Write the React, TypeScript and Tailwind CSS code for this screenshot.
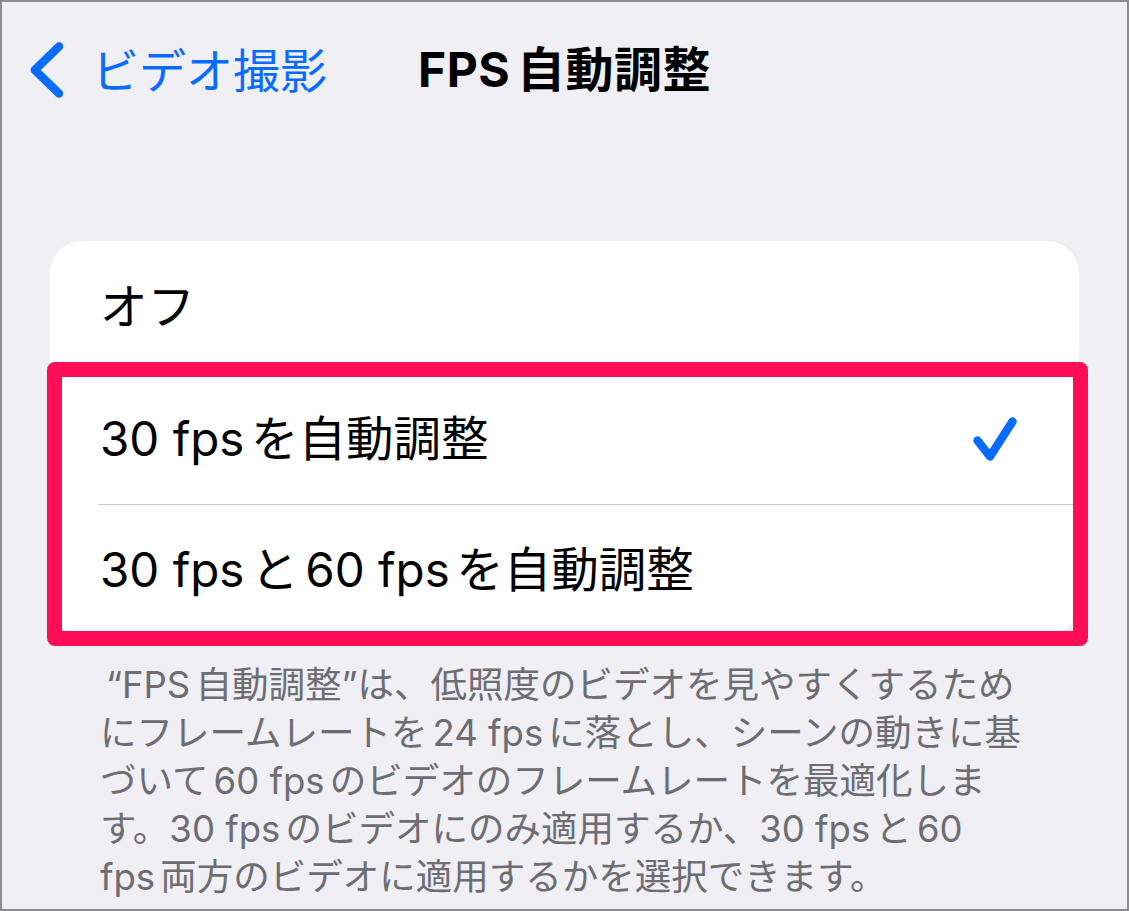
import React from "react";

const CJK = /[\u3040-\u30ff\u3400-\u9fff\uff00-\uffef]/;

function AutoSpace({ text }: { text: string }) {
  const parts = text.split(/([A-Za-z0-9][A-Za-z0-9 ]*[A-Za-z0-9]|[A-Za-z0-9])/);
  return (
    <>
      {parts.map((p, i) => {
        if (i % 2 === 0) return <React.Fragment key={i}>{p}</React.Fragment>;
        const prev = parts[i - 1] || "";
        const next = parts[i + 1] || "";
        const left = prev.length > 0 && CJK.test(prev[prev.length - 1]);
        const right = next.length > 0 && CJK.test(next[0]);
        return (
          <span
            key={i}
            className={
              (left ? "ml-[0.14em] " : "") + (right ? "mr-[0.14em]" : "")
            }
          >
            {p}
          </span>
        );
      })}
    </>
  );
}

function Chevron() {
  return (
    <svg width="34" height="56" viewBox="0 0 34 56" fill="none">
      <path
        d="M29 4.5 L4.8 28 L29 51.5"
        stroke="#0a6cff"
        strokeWidth="8.5"
        strokeLinecap="round"
        strokeLinejoin="round"
      />
    </svg>
  );
}

function Check() {
  return (
    <svg width="44" height="44" viewBox="0 0 44 44" fill="none">
      <path
        d="M4.5 23.5 L17 39.5 L39.5 4.5"
        stroke="#0a6cff"
        strokeWidth="8.5"
        strokeLinecap="round"
        strokeLinejoin="round"
      />
    </svg>
  );
}

export default function App() {
  const footer = [
    "FPS自動調整”は、低照度のビデオを見やすくするため",
    "にフレームレートを24 fpsに落とし、シーンの動きに基",
    "づいて60 fpsのビデオのフレームレートを最適化しま",
    "す。30 fpsのビデオにのみ適用するか、30 fpsと60",
    "fps両方のビデオに適用するかを選択できます。",
  ];
  return (
    <div className="w-[1129px] h-[911px] overflow-hidden border-2 border-[#8c8c8c] bg-[#efeff4] font-['Inter','Noto_Sans_CJK_JP',sans-serif] text-black">
      {/* nav */}
      <div className="h-[136px] grid grid-cols-[1fr_auto_1fr] items-center">
        <div className="flex items-center pl-[28px]">
          <Chevron />
          <span className="ml-[28px] text-[47px] leading-none text-[#0a6cff] whitespace-nowrap">
            ビデオ撮影
          </span>
        </div>
        <div className="text-[48px] leading-none font-bold whitespace-nowrap tracking-[0.5px]">
          <AutoSpace text="FPS自動調整" />
        </div>
        <div />
      </div>

      {/* card */}
      <div className="mt-[103px] mx-[48px] relative rounded-[32px] bg-white">
        <div className="h-[131px] flex items-center pl-[50px] text-[47.5px] leading-none">
          オフ
        </div>
        <div className="ml-[48px] h-px bg-[#c8c7cc]" />
        <div className="h-[131px] flex items-center justify-between pl-[50px] pr-[62px] text-[47.5px] leading-none">
          <span className="whitespace-nowrap">
            <AutoSpace text="30 fpsを自動調整" />
          </span>
          <Check />
        </div>
        <div className="ml-[48px] h-px bg-[#c8c7cc]" />
        <div className="h-[130px] flex items-center pl-[50px] text-[47.5px] leading-none">
          <span className="whitespace-nowrap">
            <AutoSpace text="30 fpsと60 fpsを自動調整" />
          </span>
        </div>

        {/* annotation box */}
        <div className="absolute left-[-3px] top-[121px] w-[1041px] h-[284px] border-[15px] border-[#ff0e57] rounded-[8px] pointer-events-none" />
      </div>

      {/* footer */}
      <div className="mt-[26px] ml-[48px] pl-[50px] text-[36.5px] leading-[48px] text-[#6d6d72]">
        {footer.map((line, i) => (
          <div key={i} className="whitespace-nowrap">
            {i === 0 && (
              <span className="inline-block w-[22px] text-right">“</span>
            )}
            <AutoSpace text={line} />
          </div>
        ))}
      </div>
    </div>
  );
}
